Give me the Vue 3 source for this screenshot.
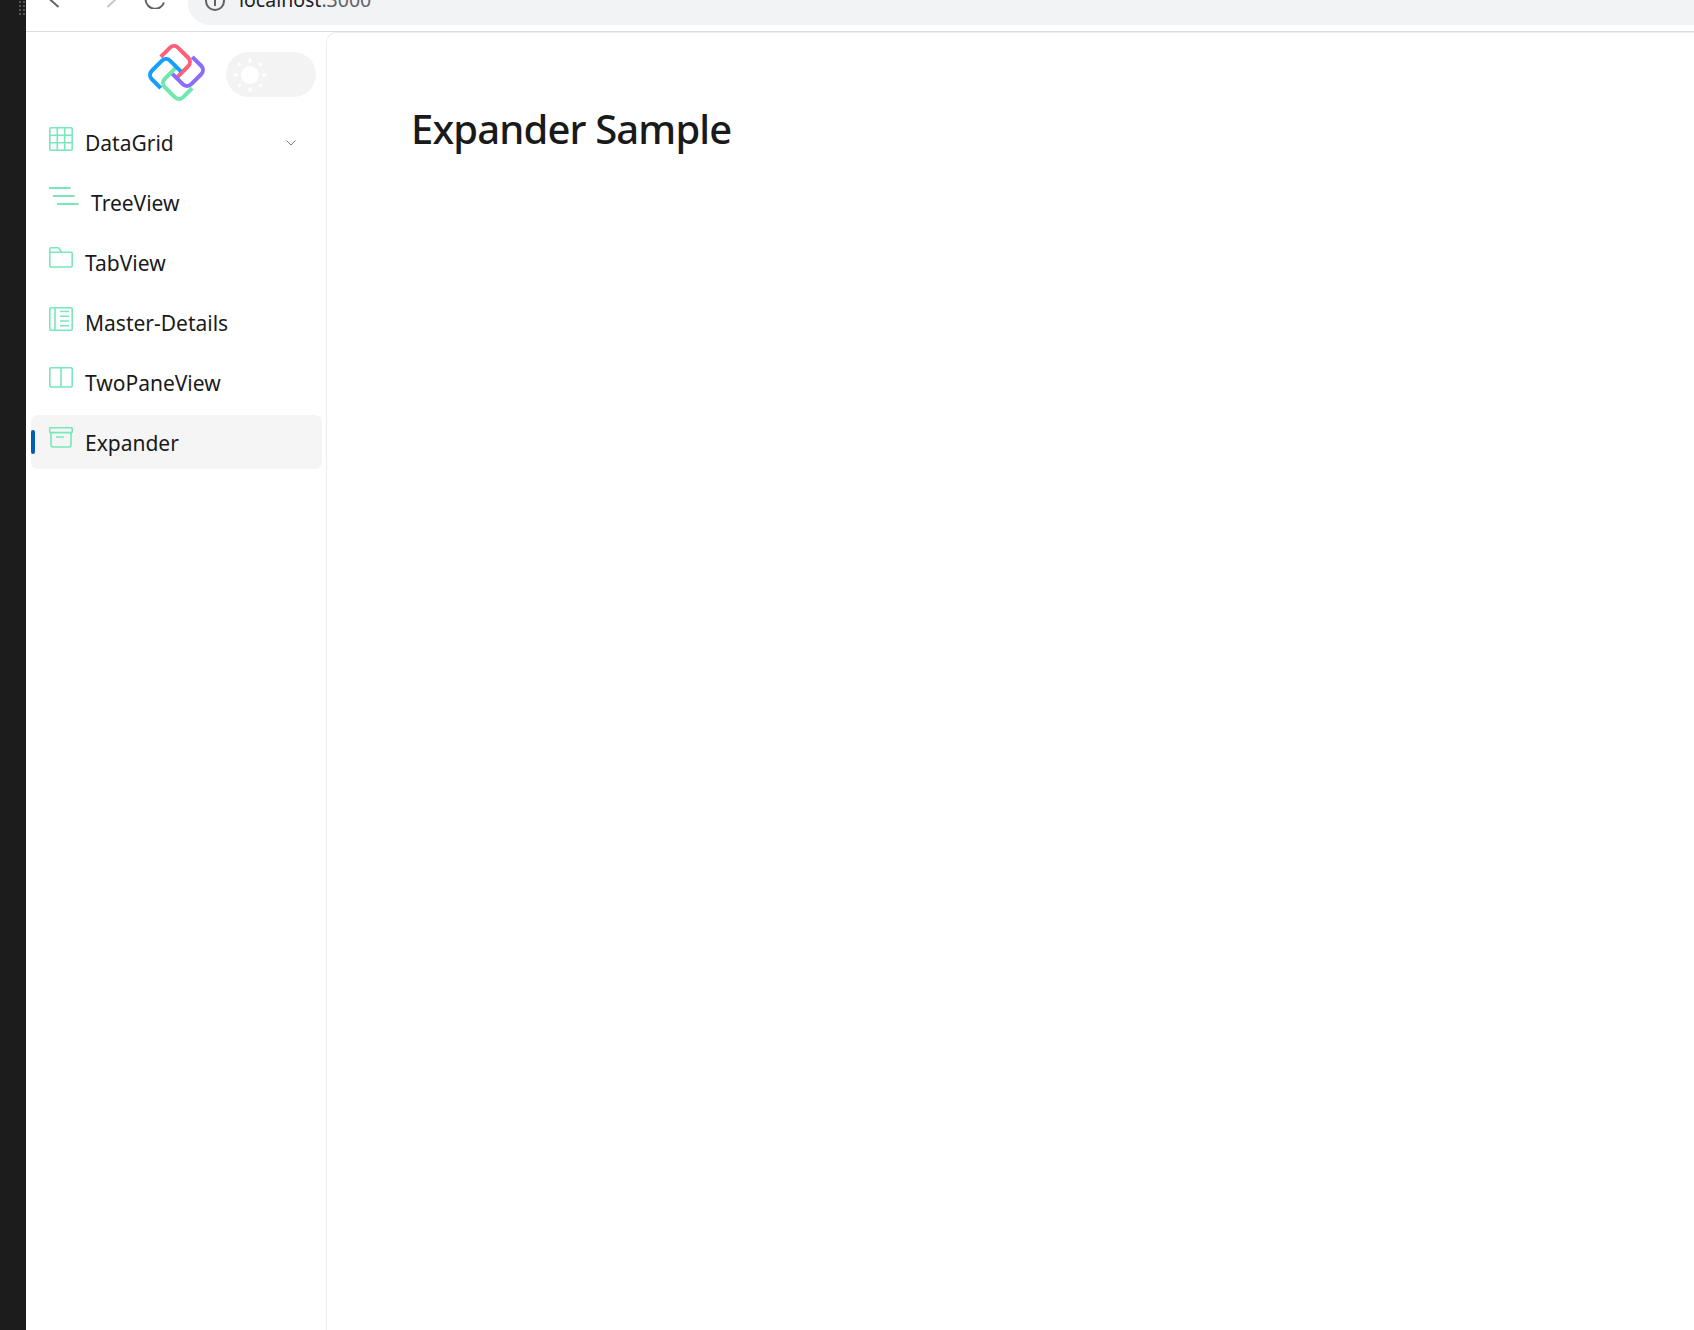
<template>
  <div class="screen">
    <div class="strip"><span class="grip"></span></div>
    <div class="window">
      <header class="chrome">
        <svg class="nav-btn back" width="12" height="16" viewBox="0 0 12 16"><path d="M1.500-1 10.500 7" /></svg>
        <svg class="nav-btn forward" width="12" height="16" viewBox="0 0 12 16"><path d="M10-1 1.500 7" /></svg>
        <svg class="nav-btn reload" width="22" height="22" viewBox="0 0 22 22"><path d="M1.600 13A9.500 9.500 0 0 0 20 15.500" /></svg>
        <div class="url">
          <svg class="info" width="20" height="20" viewBox="0 0 20 20"><circle cx="10" cy="10" r="9" /><path d="M10 8v7" /></svg>
          <span class="host">localhost<span class="port">:3000</span></span>
        </div>
      </header>
      <div class="body">
        <aside class="sidebar">
          <div class="brand">
            <svg class="logo" width="62" height="62" viewBox="0 0 62 62">
              <path v-for="ring in rings" :key="ring.color" class="ring" :d="ringPath" :stroke="ring.color" :transform="`rotate(${ring.angle} 30.5 30.5)`" />
            </svg>
            <div class="theme-toggle">
              <svg width="36" height="36" viewBox="0 0 36 36">
                <circle cx="18" cy="18" r="9" fill="#fff" />
                <path d="M18 1.500v4M18 30.500v4M1.500 18h4M30.500 18h4M6.400 6.400l2 2M27.600 27.600l2 2M6.400 29.600l2-2M27.600 8.400l2-2" />
              </svg>
            </div>
          </div>
          <nav class="menu">
            <a v-for="item in items" :key="item.label" class="item" :class="{ active: item.label === current }">
              <svg class="icon" :class="{ thick: item.thick }" :width="item.width" height="24" :viewBox="`0 0 ${item.width} 24`"><path :d="item.path" /></svg>
              <span class="label">{{ item.label }}</span>
              <svg v-if="item.children" class="chevron" width="10" height="6" viewBox="0 0 10 6"><path d="M.5.500 5 5 9.500.500" /></svg>
            </a>
          </nav>
        </aside>
        <main class="content">
          <h1>Expander Sample</h1>
        </main>
      </div>
    </div>
  </div>
</template>

<script setup>
const current = "Expander";

// one open ring, turned four times round the logo's middle
const ringPath = "M14.800 14.800 23.760 5.840A6 6 0 0 1 32.240 5.840L42.160 15.760A6 6 0 0 1 42.160 24.240L31.300 35.100";
const rings = [
  { color: "#ff5f78", angle: 0 },
  { color: "#8a6cff", angle: 90 },
  { color: "#6fe8b0", angle: 180 },
  { color: "#159dff", angle: 270 },
];

const items = [
  {
    label: "DataGrid",
    width: 24,
    children: true,
    path: "M2 .8h20a1.200 1.200 0 0 1 1.200 1.200v20a1.200 1.200 0 0 1-1.200 1.200H2A1.200 1.200 0 0 1 .8 22V2A1.200 1.200 0 0 1 2 .8ZM8.300.8v22.400M15.700.8v22.400M.8 8.300h22.400M.8 15.700h22.400",
  },
  {
    label: "TreeView",
    width: 30,
    thick: true,
    path: "M0 1h21.500M4 9h21.500M8 17h21.500",
  },
  {
    label: "TabView",
    width: 24,
    path: "M.8 5.200V2A1.200 1.200 0 0 1 2 .8h7a1.300 1.300 0 0 1 1 .5l2.500 3.900H22A1.200 1.200 0 0 1 23.200 6.400V18.800A1.200 1.200 0 0 1 22 20H2A1.200 1.200 0 0 1 .8 18.800V5.200H12.500",
  },
  {
    label: "Master-Details",
    width: 24,
    path: "M2 .8h20a1.200 1.200 0 0 1 1.200 1.200v20a1.200 1.200 0 0 1-1.200 1.200H2A1.200 1.200 0 0 1 .8 22V2A1.200 1.200 0 0 1 2 .8ZM6 .8v22.400M11 4.500h9M11 9.200h9M11 14h9M11 18.700h9",
  },
  {
    label: "TwoPaneView",
    width: 24,
    path: "M2 .8h20a1.200 1.200 0 0 1 1.200 1.200v16.800a1.200 1.200 0 0 1-1.200 1.200H2A1.200 1.200 0 0 1 .8 18.800V2A1.200 1.200 0 0 1 2 .8ZM12 .8v19.200",
  },
  {
    label: "Expander",
    width: 24,
    path: "M1.300.8h21.400a.5.500 0 0 1 .5.500v3.800a.5.500 0 0 1-.5.500H1.300a.5.500 0 0 1-.5-.5V1.300a.5.500 0 0 1 .5-.5ZM2 5.600V17.800A2.200 2.200 0 0 0 4.200 20h15.600A2.200 2.200 0 0 0 22 17.800V5.600M7 10h8",
  },
];
</script>

<style>
html,
body {
  margin: 0;
  background: #fff;
}
</style>

<style scoped>
.screen {
  display: flex;
  width: 1694px;
  height: 1330px;
  overflow: hidden;
  font-family: "Noto Sans", "Open Sans", sans-serif;
  color: #1a1a1a;
  background: #fff;
}

.strip {
  flex: none;
  width: 26px;
  background: #1c1c1c;
  position: relative;
}

.grip {
  position: absolute;
  top: 0;
  left: 18px;
  width: 8px;
  height: 16px;
  background-image: radial-gradient(#555 1px, transparent 1.200px);
  background-size: 4px 4px;
}

.window {
  flex: 1;
  display: flex;
  flex-direction: column;
  min-width: 0;
}

.chrome {
  flex: none;
  height: 31px;
  display: flex;
  align-items: flex-start;
  border-bottom: 1px solid #dcdcdc;
  overflow: hidden;
}

.nav-btn {
  flex: none;
  fill: none;
  stroke: #5f6368;
  stroke-width: 2;
}

.back {
  margin-left: 22px;
}

.forward {
  margin-left: 46px;
  stroke: #c4c6c9;
}

.reload {
  margin: -13px 0 0 26px;
}

.url {
  flex: 1;
  height: 25px;
  margin-left: 22px;
  display: flex;
  align-items: flex-start;
  background: #f1f3f4;
  border-bottom-left-radius: 22px;
  padding-left: 17px;
}

.info {
  flex: none;
  margin-top: -9px;
  fill: none;
  stroke: #5f6368;
  stroke-width: 2;
}

.host {
  margin: -15px 0 0 14px;
  font-size: 19.500px;
  line-height: 30px;
  color: #202124;
}

.port {
  color: #5f6368;
}

.body {
  flex: 1;
  display: flex;
  min-height: 0;
}

.sidebar {
  flex: none;
  width: 300px;
  padding: 0 4px 0 5px;
  box-sizing: border-box;
}

.brand {
  height: 83px;
  display: flex;
  align-items: flex-start;
}

.logo {
  flex: none;
  margin: 10px 0 0 115px;
}

.ring {
  fill: none;
  stroke-width: 4;
}

.theme-toggle {
  flex: none;
  width: 90px;
  height: 45px;
  margin: 20px 0 0 18px;
  border-radius: 23px;
  background: #f3f3f3;
  display: flex;
  align-items: center;
  padding-left: 6px;
  box-sizing: border-box;
}

.theme-toggle path {
  fill: none;
  stroke: #fff;
  stroke-width: 3;
}

.menu {
  display: flex;
  flex-direction: column;
  gap: 6px;
}

.item {
  position: relative;
  height: 54px;
  display: flex;
  align-items: flex-start;
  padding: 12px 0 0 18px;
  border-radius: 7px;
  box-sizing: border-box;
}

.item.active {
  background: #f5f5f5;
}

.item.active::before {
  content: "";
  position: absolute;
  left: 0;
  top: 15px;
  width: 4px;
  height: 24px;
  border-radius: 2px;
  background: #005fb0;
}

.icon {
  flex: none;
  margin-right: 12px;
  fill: none;
  stroke: #78e8ba;
  stroke-width: 1.600;
}

.icon.thick {
  stroke-width: 1.800;
}

.label {
  font-size: 21px;
  line-height: 32px;
}

.chevron {
  position: absolute;
  right: 26px;
  top: 25px;
  fill: none;
  stroke: #7a7a7a;
  stroke-width: 1;
}

.content {
  flex: 1;
  min-width: 0;
  border-left: 1px solid #ededed;
  border-top: 1px solid #ededed;
  border-top-left-radius: 10px;
  padding: 68px 0 0 84px;
}

h1 {
  margin: 0;
  font-size: 40px;
  line-height: 56px;
  font-weight: 500;
  letter-spacing: -0.85px;
}
</style>
